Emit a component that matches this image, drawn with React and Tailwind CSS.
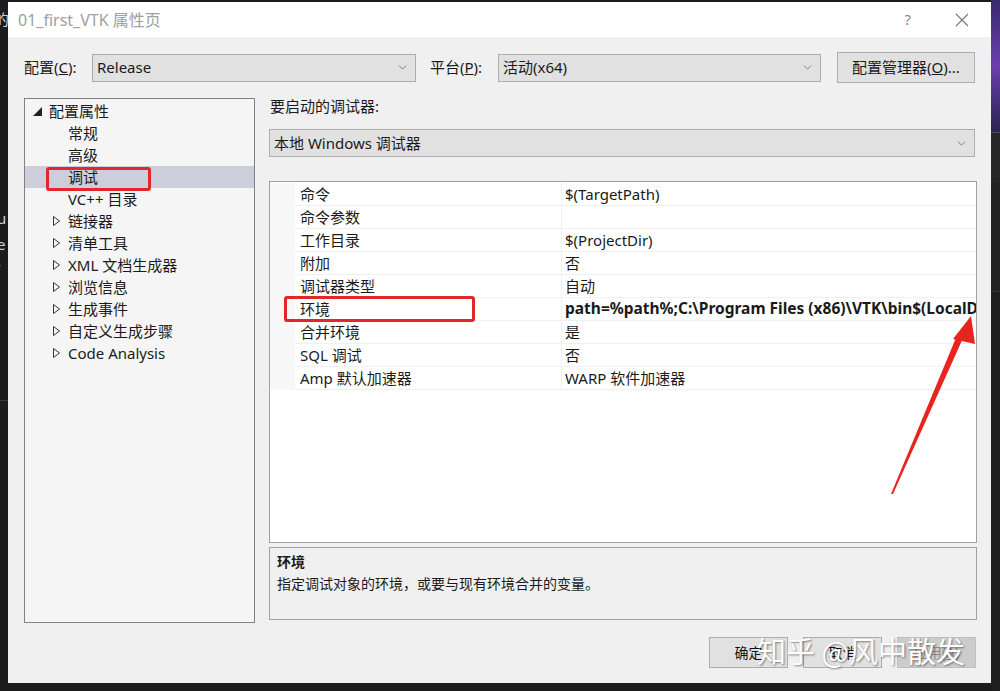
import { ChevronDown } from 'lucide-react';

const font = { fontFamily: '"Noto Sans", "Noto Sans CJK SC", sans-serif' };

const treeItems = [
  { label: '常规' },
  { label: '高级' },
  { label: '调试', selected: true },
  { label: 'VC++ 目录' },
  { label: '链接器', arrow: true },
  { label: '清单工具', arrow: true },
  { label: 'XML 文档生成器', arrow: true },
  { label: '浏览信息', arrow: true },
  { label: '生成事件', arrow: true },
  { label: '自定义生成步骤', arrow: true },
  { label: 'Code Analysis', arrow: true },
];

const props = [
  ['命令', '$(TargetPath)'],
  ['命令参数', ''],
  ['工作目录', '$(ProjectDir)'],
  ['附加', '否'],
  ['调试器类型', '自动'],
  ['环境', 'path=%path%;C:\\Program Files (x86)\\VTK\\bin$(LocalDebuggerEnvironment)', true],
  ['合并环境', '是'],
  ['SQL 调试', '否'],
  ['Amp 默认加速器', 'WARP 软件加速器'],
];

function Combo({ text, className }) {
  return (
    <div className={`h-[28px] bg-[#e1e1e1] border border-[#adadad] flex items-center pl-[4px] pr-[6px] ${className}`}>
      <span className="flex-1 text-[15px] text-[#1a1a1a]">{text}</span>
      <ChevronDown size={13} strokeWidth={1.3} className="text-[#555]" />
    </div>
  );
}

function Btn({ children, disabled }) {
  return (
    <div className={`w-[79px] h-[31px] border flex items-center justify-center text-[14px] ${disabled ? 'bg-[#cccccc] border-[#bfbfbf] text-[#8a8a8a]' : 'bg-[#e1e1e1] border-[#adadad] text-[#111]'}`}>
      {children}
    </div>
  );
}

export default function App() {
  return (
    <div className="w-[1000px] h-[691px] bg-[#1c1c1c] flex relative overflow-hidden" style={font}>
      {/* left strip of the window behind */}
      <div className="w-[8px] h-full flex flex-col text-[#cfcfcf] text-[15px] overflow-hidden">
        <div className="mt-[8px] -ml-[6px]">的</div>
        <div className="mt-[176px] -ml-[3px]">u</div>
        <div className="mt-[4px] -ml-[3px]">e</div>
        <div className="-ml-[3px] text-[12px]">›</div>
        <div className="mt-[126px] h-[1px] bg-[#3a3a3a]" />
      </div>

      {/* dialog */}
      <div className="w-[983px] h-[681px] mt-[2px] bg-[#f0f0f0] flex flex-col">
        <div className="h-[35px] bg-white flex items-center pl-[10px] pr-[22px]">
          <span className="flex-1 text-[16px] text-[#a0a0a0]">01_first_VTK 属性页</span>
          <span className="text-[15px] text-[#8a8a8a] mr-[44px]">?</span>
          <svg width="14" height="14" viewBox="0 0 14 14">
            <path d="M1 1 L13 13 M13 1 L1 13" stroke="#777" strokeWidth="1.1" />
          </svg>
        </div>

        <div className="flex flex-col pl-[16px] pr-[14px]">
          <div className="h-[31px] mt-[15px] flex items-center text-[15px] text-[#1a1a1a]">
            <span className="w-[68px]">配置(<u>C</u>):</span>
            <Combo text="Release" className="w-[324px]" />
            <span className="ml-[14px] w-[68px]">平台(<u>P</u>):</span>
            <Combo text="活动(x64)" className="w-[323px]" />
            <div className="ml-[16px] w-[138px] h-[31px] bg-[#e1e1e1] border border-[#adadad] flex items-center justify-center">
              配置管理器(<u>O</u>)...
            </div>
          </div>

          <div className="flex mt-[15px]">
            {/* tree */}
            <div className="w-[231px] h-[525px] bg-[#f5f5f5] border border-[#828282] pt-[1px] text-[15px] text-[#1a1a1a] relative">
              <div className="h-[22px] flex items-center">
                <svg width="9" height="9" viewBox="0 0 9 9" className="ml-[8px] mr-[7px]">
                  <polygon points="9,0 9,9 0,9" fill="#222" />
                </svg>
                <span>配置属性</span>
              </div>
              {treeItems.map((it) => (
                <div key={it.label} className={`h-[22px] flex items-center ${it.selected ? 'bg-[#cccedb]' : ''}`}>
                  <span className="w-[43px] flex justify-end pr-[8px]">
                    {it.arrow && (
                      <svg width="7" height="10" viewBox="0 0 7 10">
                        <polygon points="0.5,0.5 6.5,5 0.5,9.5" fill="none" stroke="#333" strokeWidth="1" />
                      </svg>
                    )}
                  </span>
                  <span>{it.label}</span>
                </div>
              ))}
              <div className="absolute left-[21px] top-[68px] w-[105px] h-[24px] border-[3px] border-[#e3262b] rounded-[3px]" />
            </div>

            {/* right column */}
            <div className="ml-[14px] w-[708px] flex flex-col">
              <div className="h-[31px] leading-[16px] text-[15px] text-[#1a1a1a] pl-[1px]">要启动的调试器:</div>
              <Combo text="本地 Windows 调试器" className="w-[706px]" />

              <div className="mt-[24px] h-[362px] bg-white border border-[#a0a0a0] pt-[1px] relative overflow-hidden">
                {props.map(([name, value, bold]) => (
                  <div key={name} className="h-[23px] flex text-[15px] text-[#1a1a1a]">
                    <div className="w-[25px] bg-[#f7f7f7]" />
                    <div className="w-[267px] pl-[5px] flex items-center border-b border-r border-[#f0f0f0]">{name}</div>
                    <div className={`flex-1 pl-[3px] flex items-center border-b border-[#f0f0f0] whitespace-nowrap overflow-hidden ${bold ? 'font-bold text-[15.5px]' : ''}`}>
                      {value}
                    </div>
                  </div>
                ))}
                <div className="absolute left-[14px] top-[114px] w-[191px] h-[26px] border-[3px] border-[#e3262b] rounded-[3px]" />
              </div>

              <div className="mt-[4px] h-[73px] border border-[#a0a0a0] px-[7px] pt-[3px] text-[14px] text-[#1a1a1a]">
                <div className="font-bold leading-[22px]">环境</div>
                <div className="leading-[22px]">指定调试对象的环境，或要与现有环境合并的变量。</div>
              </div>
            </div>
          </div>

          <div className="mt-[14px] flex justify-end gap-[15px] pr-[1px]">
            <Btn>确定</Btn>
            <Btn>取消</Btn>
            <Btn disabled>应用(<u>A</u>)</Btn>
          </div>
        </div>
      </div>

      {/* right strip of the desktop */}
      <div className="flex-1 h-full flex flex-col">
        <div className="h-[132px] bg-gradient-to-b from-[#3a2a6e] via-[#6b3fb0] to-[#2a2350]" />
        <div className="h-[50px] bg-[#262626] border-t border-[#4a4a6a]" />
        <div className="h-[110px] bg-[#222] border-b border-[#333]" />
        <div className="flex-1 bg-[#1e1e1e]" />
      </div>

      {/* red annotation arrow */}
      <svg className="absolute left-0 top-0 pointer-events-none" width="1000" height="691">
        <polygon points="891,494 893,494 964,336 958,333" fill="#e8241f" />
        <polygon points="971,316 953,339 975,344" fill="#e8241f" />
      </svg>

      {/* watermark */}
      <div
        className="absolute left-[757px] top-[629px] text-[29px] text-white pointer-events-none"
        style={{ fontFamily: '"Noto Sans CJK SC", sans-serif', textShadow: '1px 1px 2px rgba(0,0,0,0.45)' }}
      >
        知乎 @风中散发
      </div>
    </div>
  );
}
